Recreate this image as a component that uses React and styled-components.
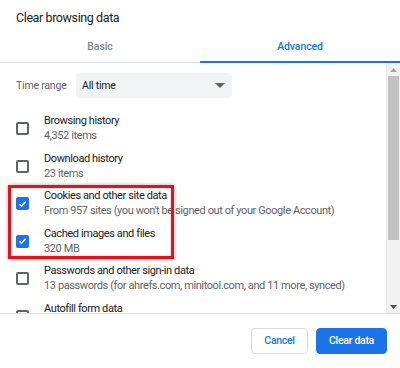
import React from 'react';
import styled, { createGlobalStyle } from 'styled-components';

const GlobalStyle = createGlobalStyle`
  html, body {
    margin: 0;
    padding: 0;
    background: #ffffff;
  }
  body {
    font-family: Roboto, "Liberation Sans", Arial, sans-serif;
    color: #202124;
  }
`;

const items = [
  { title: 'Browsing history', sub: '4,352 items', checked: false },
  { title: 'Download history', sub: '23 items', checked: false },
  { title: 'Cookies and other site data', sub: "From 957 sites (you won't be signed out of your Google Account)", checked: true, marked: true },
  { title: 'Cached images and files', sub: '320 MB', checked: true, marked: true },
  { title: 'Passwords and other sign-in data', sub: '13 passwords (for ahrefs.com, minitool.com, and 11 more, synced)', checked: false },
  { title: 'Autofill form data', sub: '', checked: false },
];

const Check = ({ checked }) => (
  <CheckBox checked={checked}>
    {checked && (
      <svg width="10" height="10" viewBox="0 0 10 10">
        <path d="M1.6 5.2 L4 7.4 L8.5 2.6" fill="none" stroke="#fff" strokeWidth="1.6" />
      </svg>
    )}
  </CheckBox>
);

const Row = ({ item }) => (
  <ItemRow>
    <Check checked={item.checked} />
    <ItemText>
      <ItemTitle>{item.title}</ItemTitle>
      {item.sub && <ItemSub>{item.sub}</ItemSub>}
    </ItemText>
  </ItemRow>
);

const App = () => {
  const before = items.slice(0, 2);
  const marked = items.filter((i) => i.marked);
  const after = items.slice(4);

  return (
    <Dialog>
      <GlobalStyle />
      <Title>Clear browsing data</Title>
      <Tabs>
        <Tab>Basic</Tab>
        <Tab active>Advanced</Tab>
      </Tabs>

      <Body>
        <Content>
          <RangeRow>
            <RangeLabel>Time range</RangeLabel>
            <Select>
              <span>All time</span>
              <Caret />
            </Select>
          </RangeRow>
          {before.map((it) => <Row key={it.title} item={it} />)}
          <Highlight>
            {marked.map((it) => <Row key={it.title} item={it} />)}
          </Highlight>
          {after.map((it) => <Row key={it.title} item={it} />)}
        </Content>
        <ScrollBar>
          <ScrollArrow>
            <svg width="7" height="4" viewBox="0 0 7 4"><path d="M0 4 L3.5 0 L7 4 Z" fill="#a3a3a3" /></svg>
          </ScrollArrow>
          <Track>
            <Thumb />
          </Track>
          <ScrollArrow>
            <svg width="7" height="4" viewBox="0 0 7 4"><path d="M0 0 L3.5 4 L7 0 Z" fill="#505050" /></svg>
          </ScrollArrow>
        </ScrollBar>
      </Body>

      <Footer>
        <CancelButton>Cancel</CancelButton>
        <PrimaryButton>Clear data</PrimaryButton>
      </Footer>
    </Dialog>
  );
};

export default App;

const Dialog = styled.div`
  width: 400px;
  height: 368px;
  display: flex;
  flex-direction: column;
  background: #fff;
  overflow: hidden;
`;

const Title = styled.h1`
  margin: 0;
  padding: 8px 16px 0 16px;
  height: 20px;
  font-size: 12.5px;
  font-weight: 400;
  letter-spacing: -0.4px;
  line-height: 19px;
  color: #202124;
`;

const Tabs = styled.div`
  display: flex;
  height: 34px;
  border-bottom: 1px solid #e0e0e0;
`;

const Tab = styled.div`
  flex: 1;
  display: flex;
  align-items: center;
  justify-content: center;
  padding-top: 1px;
  font-size: 10.5px;
  font-weight: 500;
  letter-spacing: -0.1px;
  color: ${({ active }) => (active ? '#1a73e8' : '#80868b')};
  box-shadow: ${({ active }) => (active ? 'inset 0 -2px 0 #1a73e8' : 'none')};
  margin-bottom: -1px;
`;

const Body = styled.div`
  flex: 1;
  display: flex;
  min-height: 0;
  border-bottom: 1px solid #e0e0e0;
`;

const Content = styled.div`
  flex: 1;
  overflow: hidden;
  padding: 10px 0 0 16px;
`;

const RangeRow = styled.div`
  display: flex;
  align-items: center;
  height: 25px;
  margin-bottom: 12px;
`;

const RangeLabel = styled.div`
  width: 60px;
  white-space: nowrap;
  font-size: 10.5px;
  letter-spacing: -0.2px;
  color: #5f6368;
`;

const Select = styled.div`
  width: 156px;
  height: 25px;
  box-sizing: border-box;
  display: flex;
  align-items: center;
  justify-content: space-between;
  padding: 0 7px 0 6px;
  background: #f1f3f4;
  border-radius: 4px;
  font-size: 10.5px;
  letter-spacing: -0.2px;
  color: #202124;
`;

const Caret = styled.span`
  width: 0;
  height: 0;
  border-left: 5px solid transparent;
  border-right: 5px solid transparent;
  border-top: 5px solid #5f6368;
`;

const ItemRow = styled.div`
  display: flex;
  align-items: center;
  height: 37.5px;
`;

const CheckBox = styled.div`
  width: 13px;
  height: 13px;
  box-sizing: border-box;
  flex: none;
  border-radius: 2px;
  border: 2px solid ${({ checked }) => (checked ? '#1a73e8' : '#5f6368')};
  background: ${({ checked }) => (checked ? '#1a73e8' : '#fff')};
  display: flex;
  align-items: center;
  justify-content: center;
  margin-right: 15px;
`;

const ItemText = styled.div`
  align-self: flex-start;
  padding-top: 3px;
  display: flex;
  flex-direction: column;
  white-space: nowrap;
`;

const ItemTitle = styled.div`
  font-size: 11px;
  letter-spacing: -0.4px;
  line-height: 15px;
  color: #202124;
`;

const ItemSub = styled.div`
  font-size: 11px;
  letter-spacing: -0.4px;
  line-height: 15px;
  color: #5f6368;
`;

const Highlight = styled.div`
  position: relative;

  &::after {
    content: '';
    position: absolute;
    left: -8px;
    top: 0;
    width: 166px;
    height: 74px;
    box-sizing: border-box;
    border: 3px solid #e8101a;
    box-shadow: 0 0 4px rgba(0, 0, 0, 0.35), inset 0 0 3px rgba(0, 0, 0, 0.25);
    pointer-events: none;
  }
`;

const ScrollBar = styled.div`
  width: 13px;
  flex: none;
  display: flex;
  flex-direction: column;
  background: #f1f1f1;
  border-left: 1px solid #e8e8e8;
`;

const ScrollArrow = styled.div`
  height: 13px;
  display: flex;
  align-items: center;
  justify-content: center;
`;

const Track = styled.div`
  flex: 1;
  padding: 0 1px;
`;

const Thumb = styled.div`
  height: 164px;
  background: #c1c1c1;
`;

const Footer = styled.div`
  height: 53px;
  display: flex;
  align-items: center;
  justify-content: flex-end;
  gap: 8px;
  padding: 0 13px 1px 0;
`;

const Button = styled.button`
  height: 26px;
  padding: 0;
  border-radius: 4px;
  font-family: Roboto, "Liberation Sans", Arial, sans-serif;
  font-size: 10.5px;
  font-weight: 500;
  letter-spacing: -0.3px;
  cursor: pointer;
`;

const CancelButton = styled(Button)`
  width: 57px;
  background: #fff;
  color: #1a73e8;
  border: 1px solid #dadce0;
`;

const PrimaryButton = styled(Button)`
  width: 71px;
  background: #1a73e8;
  color: #fff;
  border: 1px solid #1a73e8;
`;
